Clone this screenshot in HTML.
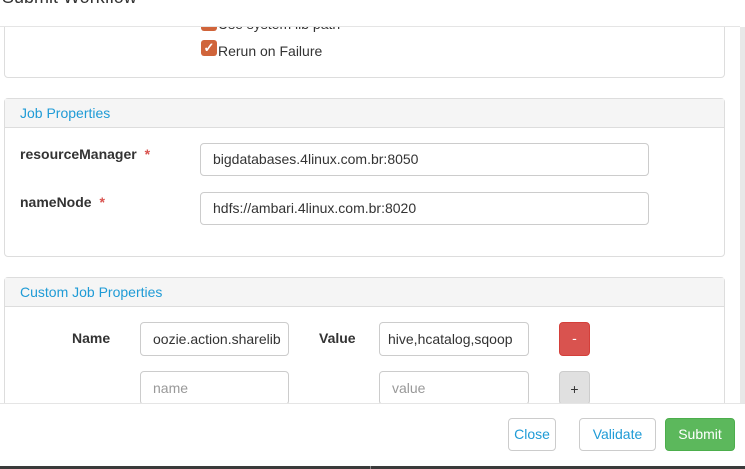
<!DOCTYPE html><html style="overflow:hidden"><head><style>
body{margin:0;width:745px;height:469px;overflow:hidden;background:#fff;font-family:"Liberation Sans",sans-serif;font-size:14px;color:#333;position:relative}
.a{position:absolute}
.panel{position:absolute;left:4px;width:719px;border:1px solid #ddd;border-radius:4px;background:#fff}
.ph{height:28px;background:#f5f5f5;border-bottom:1px solid #ddd;color:#1f9bd6;line-height:28px;padding-left:15px;font-size:14px}
.inp{position:absolute;border:1px solid #ccc;border-radius:4px;height:31px;line-height:31px;padding-left:12px;box-sizing:border-box;background:#fff;overflow:hidden;white-space:nowrap}
.lbl{position:absolute;font-weight:bold}
.btn{position:absolute;border:1px solid #ccc;border-radius:4px;height:33px;line-height:31px;box-sizing:border-box;text-align:center;color:#1f9bd6;background:#fff}
</style></head><body>
<div class="a" style="left:740px;top:27px;width:5px;height:376px;background:#e8e8e8"></div>
<div class="panel" style="top:-10px;height:86px"></div>
<div class="a" style="left:201px;top:19px;width:16px;height:12px;background:#d0643a;border-radius:3px"></div>
<div class="a" style="left:218px;top:16px;color:#333">Use system lib path</div>
<div class="a" style="left:0;top:0;width:740px;height:26px;background:#fff;border-bottom:1px solid #e5e5e5"></div>
<div class="a" style="left:2px;top:-13px;font-size:18px;color:#333">Submit Workflow</div>
<div class="a" style="left:201px;top:40px;width:16px;height:16px;background:#d0643a;border-radius:3px;color:#fff;font-size:13px;line-height:16px;text-align:center;font-weight:bold">✓</div>
<div class="a" style="left:218px;top:43px">Rerun on Failure</div>
<div class="panel" style="top:98px;height:157px"><div class="ph">Job Properties</div></div>
<div class="lbl" style="left:20px;top:146px">resourceManager <span style="color:#d9534f;margin-left:4px">*</span></div>
<div class="lbl" style="left:20px;top:194px">nameNode <span style="color:#d9534f;margin-left:4px">*</span></div>
<div class="inp" style="left:200px;top:143px;width:449px;height:33px;line-height:31px">bigdatabases.4linux.com.br:8050</div>
<div class="inp" style="left:200px;top:192px;width:449px;height:33px;line-height:31px">hdfs://ambari.4linux.com.br:8020</div>
<div class="panel" style="top:277px;height:160px"><div class="ph">Custom Job Properties</div></div>
<div class="lbl" style="left:72px;top:330px">Name</div>
<div class="lbl" style="left:319px;top:330px">Value</div>
<div class="inp" style="left:140px;top:322px;width:149px;height:34px;line-height:32px;padding-left:12px">oozie.action.sharelib</div>
<div class="inp" style="left:379px;top:322px;width:150px;height:34px;line-height:32px;padding-left:0;text-indent:8px">hive,hcatalog,sqoop</div>
<div class="btn" style="left:559px;top:322px;width:31px;height:34px;background:#d9534f;border-color:#d43f3a;color:#fff">-</div>
<div class="inp" style="left:140px;top:371px;width:149px;height:34px;line-height:32px;color:#999">name</div>
<div class="inp" style="left:379px;top:371px;width:150px;height:34px;line-height:32px;color:#999">value</div>
<div class="btn" style="left:559px;top:371px;width:31px;height:34px;background:#e0e0e0;color:#333;line-height:30px;padding-top:2px">+</div>
<div class="a" style="left:0;top:403px;width:745px;height:63px;background:#fff;border-top:1px solid #e5e5e5"></div>
<div class="btn" style="left:508px;top:418px;width:48px">Close</div>
<div class="btn" style="left:579px;top:418px;width:77px">Validate</div>
<div class="btn" style="left:665px;top:418px;width:70px;background:#5cb85c;border-color:#4cae4c;color:#fff">Submit</div>
<div class="a" style="left:0;top:466px;width:745px;height:3px;background:#3a3a3a"></div>
<div class="a" style="left:370px;top:466px;width:1px;height:3px;background:#888"></div>
</body></html>
